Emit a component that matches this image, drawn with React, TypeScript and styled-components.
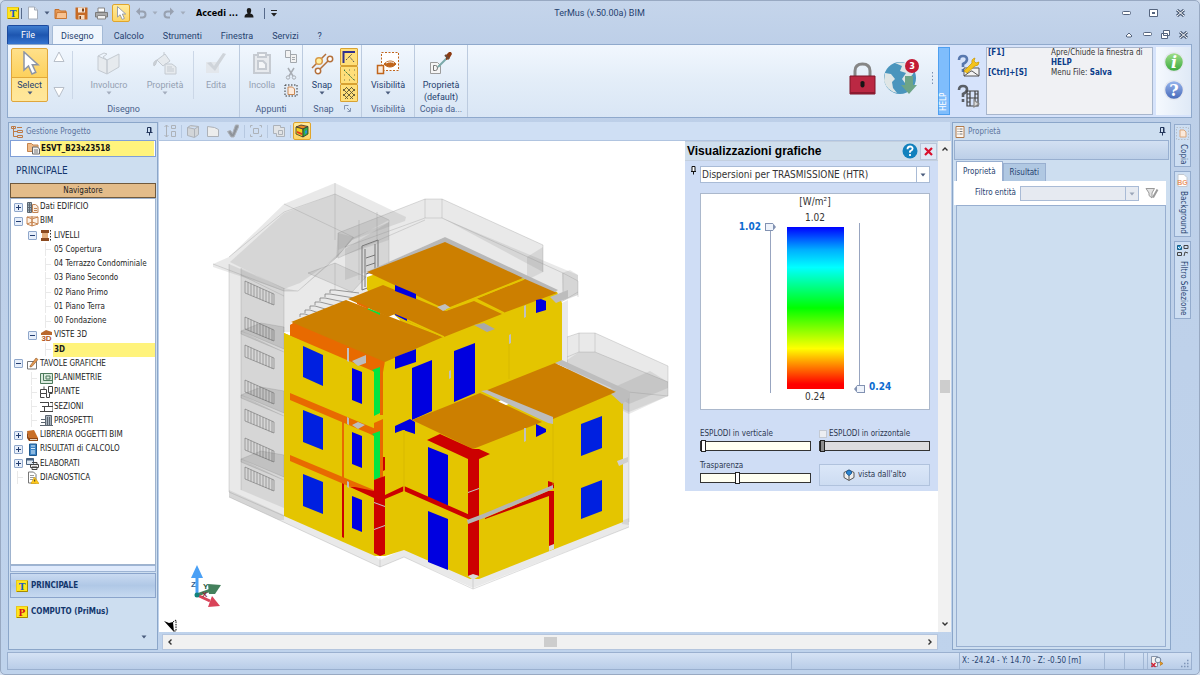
import React, { useState } from "react";
import styled, { createGlobalStyle, css } from "styled-components";

const tahoma = '"DejaVu Sans Condensed", "DejaVu Sans", sans-serif';
const segoe = 'Roboto, "Open Sans", sans-serif';
const ink = "#26426f";
const line = "#8ba6c9";

const Global = createGlobalStyle`
  *, *::before, *::after { box-sizing: border-box; }
  body { margin: 0; background: #d3dfef; font: 9px/12px ${segoe}; color: ${ink}; }
  button { font: inherit; color: inherit; padding: 0; border: 0; background: none; }
  select, input { font: inherit; color: inherit; margin: 0; }
  svg { display: block; flex: none; writing-mode: horizontal-tb; }
  ul { list-style: none; margin: 0; padding: 0; }
`;

/* ---------- window frame ---------- */

const Window = styled.div`
  min-height: 100vh;
  display: flex;
  flex-direction: column;
  padding: 0 7px 4px 6px;
  border: 1px solid #98a9c2;
  border-radius: 5px;
  background: linear-gradient(#c5d5eb, #bdcfe8 44px, #bfd3ec);
`;

const TitleBar = styled.header`
  height: 24px;
  display: grid;
  grid-template-columns: 1fr auto 1fr;
  align-items: center;
`;

const QuickBar = styled.div`
  display: flex;
  align-items: center;
  gap: 2px;
`;

const QuickButton = styled.button<{ $active?: boolean }>`
  width: 18px;
  height: 18px;
  display: grid;
  place-items: center;
  ${(p) =>
    p.$active &&
    css`
      border: 1px solid #e0a52c;
      border-radius: 2px;
      background: linear-gradient(#ffeb9c, #fdd566);
    `}
`;

const Divider = styled.i`
  width: 1px;
  height: 11px;
  background: #56698a;
`;

const Account = styled.button`
  display: flex;
  align-items: center;
  gap: 6px;
  margin: 0 8px;
  font: bold 9px/12px ${tahoma};
  color: #000;
`;

const QuickMenu = styled.button`
  width: 14px;
  height: 12px;
  display: grid;
  place-items: center;
`;

const Title = styled.h1`
  margin: 0;
  font: 9px/12px ${segoe};
`;

const WindowButtons = styled.div<{ $wide?: boolean }>`
  display: flex;
  justify-content: flex-end;
  align-items: center;
  gap: ${(p) => (p.$wide ? 15 : 6)}px;
  padding-right: ${(p) => (p.$wide ? 6 : 3)}px;
`;

const GlyphButton = styled.button`
  width: 12px;
  height: 12px;
  display: grid;
  place-items: center;
`;

/* ---------- ribbon ---------- */

const TabRow = styled.nav`
  height: 19px;
  display: flex;
  align-items: stretch;
`;

const FileTab = styled.button`
  width: 42px;
  margin-right: 3px;
  border: 1px solid #1c4a9e;
  border-bottom: 0;
  border-radius: 2px 2px 0 0;
  background: linear-gradient(#3f7ed0, #1d55b0 50%, #3474cf);
  color: #fff;
`;

const RibbonTab = styled.button<{ $active?: boolean }>`
  padding: 2px 8px 0;
  margin-right: 3px;
  border-radius: 2px 2px 0 0;
  ${(p) =>
    p.$active &&
    css`
      border: 1px solid #a4bad6;
      border-bottom: 0;
      background: #f0f6fd;
    `}
`;

const Spacer = styled.div`
  flex: 1;
`;

const Ribbon = styled.section`
  height: 74px;
  flex: none;
  display: flex;
  align-items: stretch;
  border: 1px solid #8fa9cc;
  background: linear-gradient(#f1f7fe, #e3edf8 50%, #d9e6f5);
`;

const Group = styled.div`
  display: flex;
  flex-direction: column;
  justify-content: space-between;
  padding: 3px 3px 2px;
  border-right: 1px solid #bccbdf;
`;

const GroupBody = styled.div`
  display: flex;
  align-items: flex-start;
  gap: 2px;
`;

const GroupLabel = styled.div`
  display: flex;
  justify-content: center;
  gap: 10px;
  color: #49618b;
`;

const BigButton = styled.button<{ $w: number; $active?: boolean }>`
  width: ${(p) => p.$w}px;
  height: 54px;
  display: flex;
  flex-direction: column;
  align-items: center;
  line-height: 12px;
  border: 1px solid transparent;
  svg:first-child { margin: 2px 0 4px; }
  ${(p) =>
    p.$active &&
    css`
      border-color: #dfa63c;
      border-radius: 2px;
      background: linear-gradient(#ffe08a, #fdd15c 28px, #e2a93a 28px, #e2a93a 29px, #ffe48e 29px, #ffe79b);
    `}
  &:disabled { color: #94a0b2; }
`;

const SmallColumn = styled.div`
  display: flex;
  flex-direction: column;
  gap: 4px;
  padding: 2px 1px 0;
`;

const ScrollPair = styled.div`
  height: 48px;
  margin-top: 2px;
  padding: 1px 3px 0;
  display: flex;
  flex-direction: column;
  justify-content: space-between;
`;

const ToggleStack = styled.div`
  display: flex;
  flex-direction: column;
`;

const Toggle = styled.button`
  width: 18px;
  height: 18px;
  display: grid;
  place-items: center;
  border: 1px solid #d8a233;
  border-radius: 1px;
  background: #ffdf7a;
`;

const GroupSplit = styled.i<{ $tight?: boolean }>`
  width: 1px;
  height: 48px;
  margin: ${(p) => (p.$tight ? "3px 0 0" : "3px 6px 0 2px")};
  background: #cbd7e7;
`;

const RibbonTools = styled.div`
  display: flex;
  align-items: center;
  gap: 7px;
  margin-right: 4px;
  padding-bottom: 6px;
`;

const Badged = styled.button`
  position: relative;
`;

const Badge = styled.span`
  position: absolute;
  top: -2px;
  right: -2px;
  width: 14px;
  height: 14px;
  border-radius: 7px;
  background: #c21a35;
  color: #fff;
  font: bold 9px/14px ${tahoma};
`;

const Help = styled.section`
  display: flex;
  padding: 2px 0;
  background: #d6e3fb;
`;

const HelpStrip = styled.button`
  width: 12px;
  border: 1px solid #4e9ff0;
  background: #7fbdfc;
  color: #fff;
  writing-mode: vertical-rl;
  rotate: 180deg;
  font: 8px/10px ${tahoma};
  text-align: left;
  padding-top: 3px;
`;

const HelpActions = styled.div`
  width: 36px;
  display: flex;
  flex-direction: column;
  align-items: center;
  justify-content: space-evenly;
`;

const HelpKeys = styled.dl`
  width: 167px;
  margin: 0;
  padding: 0 1px;
  display: grid;
  grid-template-columns: 63px 1fr;
  align-content: start;
  border: 1px solid #a8b6cc;
  background: #f0f1f4;
  font: 8px/10px ${tahoma};
  color: #333;
  dt, strong { font-weight: bold; color: #0a3c8a; }
  dd { margin: 0; }
`;

const Rounds = styled.div`
  width: 35px;
  display: flex;
  flex-direction: column;
  align-items: center;
  gap: 6px;
  padding-top: 4px;
  margin-left: 3px;
  background: linear-gradient(90deg, #f5f9fe, #dfe9f6);
`;

/* ---------- work area ---------- */

const Work = styled.main`
  flex: 1;
  display: flex;
  padding: 4px 0 2px 1px;
`;

const SidePanel = styled.aside`
  width: 150px;
  flex: none;
  display: flex;
  flex-direction: column;
  padding: 0 1px;
  border: 1px solid ${line};
  background: #cddef0;
`;

const PanelHeader = styled.h2`
  height: 17px;
  flex: none;
  display: flex;
  align-items: center;
  gap: 3px;
  margin: 0;
  padding: 0 3px 0 1px;
  font: 8px/12px ${tahoma};
  color: #5c749d;
  svg:last-child { margin-left: auto; }
`;

const ProjectBox = styled.div`
  height: 17px;
  flex: none;
  display: flex;
  align-items: center;
  padding: 0 1px 0 16px;
  gap: 0;
  border: 1px solid #7f9fd8;
  background: #fff;
`;

const ProjectName = styled.strong`
  flex: 1;
  padding-left: 1px;
  background: #fff37c;
  color: #111;
  font: bold 8px/15px ${tahoma};
`;

const SectionTitle = styled.h3`
  margin: 0;
  padding: 8px 6px 6px;
  font: 10px/12px ${tahoma};
  color: #12366c;
`;

const NavigatorBar = styled.button`
  height: 15px;
  flex: none;
  border: 1px solid #70593c;
  background: #e3bc8a;
  color: #222;
  font: 8px/12px ${tahoma};
`;

const TreeBox = styled.div`
  flex: 1;
  padding-top: 1px;
  border: 1px solid #9fb3ce;
  background: #fff;
`;

const Tree = styled.ul`
  height: 285px;
  display: grid;
  grid-auto-rows: 1fr;
  font: 8px/14px ${tahoma};
  color: #1c1c1c;
`;

const TreeRow = styled.li<{ $level: number; $selected?: boolean }>`
  display: flex;
  align-items: center;
  padding-left: ${(p) => p.$level * 14 + 1}px;
  white-space: nowrap;
  font-weight: ${(p) => (p.$selected ? "bold" : "normal")};
`;

const Slot = styled.span<{ $w: number; $dotted?: boolean }>`
  width: ${(p) => p.$w}px;
  height: 13px;
  display: grid;
  place-items: center;
  ${(p) =>
    p.$dotted &&
    css`
      background: linear-gradient(#e9e9e9, #e9e9e9) 5px 0 / 1px 100% no-repeat,
        linear-gradient(#e9e9e9, #e9e9e9) 5px 6px / 6px 1px no-repeat;
    `}
`;

const Expander = styled.button`
  width: 9px;
  height: 9px;
  display: grid;
  place-items: center;
  border: 1px solid #8fa7cb;
  border-radius: 1px;
  background: #e6eefa;
`;

const TreeLabel = styled.span<{ $selected?: boolean }>`
  flex: ${(p) => (p.$selected ? 1 : "none")};
  padding-left: 1px;
  background: ${(p) => (p.$selected ? "#fff37c" : "none")};
`;

const Grip = styled.i`
  height: 7px;
  flex: none;
  border: 1px solid #9db4d4;
  background: #dfeafc;
`;

const ModuleButton = styled.button<{ $active?: boolean }>`
  height: 25px;
  flex: none;
  display: flex;
  align-items: center;
  gap: 3px;
  margin-top: 1px;
  padding: 0 5px;
  border: 1px solid ${(p) => (p.$active ? "#8aa4cb" : "transparent")};
  background: ${(p) => (p.$active ? "linear-gradient(#c9daf1, #b0c8e6 50%, #c6d9f0)" : "none")};
  font: bold 8px/12px ${tahoma};
  color: #12366c;
`;

const PanelFoot = styled.div`
  height: 25px;
  display: flex;
  justify-content: flex-end;
  align-items: center;
  padding-right: 9px;
`;

const Center = styled.section`
  flex: 1;
  min-width: 0;
  display: flex;
  flex-direction: column;
  margin-left: 1px;
`;

const ViewToolbar = styled.div`
  height: 19px;
  flex: none;
  display: flex;
  align-items: center;
  gap: 2px;
  padding-left: 2px;
  background: #cfdff4;
  border-bottom: 1px solid #b0c4e0;
`;

const ToolSplit = styled.i`
  width: 1px;
  height: 13px;
  background: #b6c8e0;
`;

const Stage = styled.div`
  flex: 1;
  display: grid;
  grid-template-columns: 1fr 13px;
`;

const Viewport = styled.div`
  display: flex;
  justify-content: space-between;
  align-items: flex-start;
  padding-left: 3px;
  background: #fff;
`;

const ScrollBar = styled.div<{ $horizontal?: boolean }>`
  display: flex;
  flex-direction: ${(p) => (p.$horizontal ? "row" : "column")};
  justify-content: space-between;
  align-items: center;
  background: #f1f1f1;
  padding: ${(p) => (p.$horizontal ? "0 3px" : "4px 0")};
  margin: ${(p) => (p.$horizontal ? "2px 0 0 3px" : "0")};
  border: ${(p) => (p.$horizontal ? "1px solid #b4c5de" : "0")};
  height: ${(p) => (p.$horizontal ? "16px" : "auto")};
`;

const Thumb = styled.i<{ $horizontal?: boolean }>`
  width: ${(p) => (p.$horizontal ? 13 : 10)}px;
  height: ${(p) => (p.$horizontal ? 10 : 13)}px;
  background: #cdcdcd;
`;

/* ---------- thermal palette ---------- */

const Palette = styled.section`
  width: 253px;
  flex: none;
  background: #cfddf5;
`;

const PaletteHead = styled.h2`
  height: 20px;
  display: flex;
  align-items: center;
  gap: 2px;
  margin: 0 0 5px;
  padding: 0 1px 0 2px;
  border: 1px solid #c3cfdf;
  border-width: 1px 0;
  background: #cfdeec;
  font: bold 12px/18px "Liberation Sans", sans-serif;
  color: #000;
  button:first-of-type { margin-left: auto; }
`;

const CloseButton = styled.button`
  width: 17px;
  height: 17px;
  display: grid;
  place-items: center;
  border: 1px solid #b9c6da;
  background: #dfe9f6;
`;

const PaletteRow = styled.div`
  display: flex;
  gap: 4px;
  padding: 0 8px 0 6px;
`;

const Combo = styled.div<{ $muted?: boolean }>`
  flex: 1;
  height: ${(p) => (p.$muted ? 15 : 17)}px;
  position: relative;
  display: flex;
  border: 1px solid #a9bbd6;
  background: ${(p) => (p.$muted ? "#e6eaf1" : "#fff")};
  svg { position: absolute; right: 3px; top: ${(p) => (p.$muted ? 5 : 6)}px; pointer-events: none; }
  &::after {
    content: "";
    position: absolute;
    inset: 0 12px 0 auto;
    border-left: 1px solid #a9bbd6;
  }
`;

const ComboSelect = styled.select`
  appearance: none;
  flex: 1;
  min-width: 0;
  height: 100%;
  padding: 0 14px 0 1px;
  border: 0;
  background: none;
  color: #333;
  font: 10px/15px ${tahoma};
`;

const Legend = styled.div`
  display: grid;
  grid-template-columns: 64px 22px 57px 21px 1fr;
  grid-template-rows: 16px 17px 162px 16px;
  margin: 10px 8px 0 15px;
  padding-bottom: 4px;
  border: 1px solid #abb8cc;
  background: #fff;
  font: 10px/16px ${tahoma};
  color: #333;
  text-align: center;
`;

const LegendText = styled.span<{ $row: number }>`
  grid-area: ${(p) => p.$row} / 1 / auto / -1;
`;

const Ramp = styled.div`
  grid-area: 3 / 3;
  background: linear-gradient(#00f, #00aeff 14%, #0ff 25%, #0f0 50%, #ff0 75%, #f00 97%);
`;

const Limit = styled.output<{ $low?: boolean }>`
  grid-area: 3 / ${(p) => (p.$low ? 5 : 1)};
  align-self: ${(p) => (p.$low ? "end" : "start")};
  text-align: ${(p) => (p.$low ? "left" : "right")};
  padding: 0 4px;
  margin: ${(p) => (p.$low ? "0 0 -6px" : "-8px 0 0")};
  font: bold 10px/16px ${tahoma};
  color: #0e6bd0;
`;

const RampSlider = styled.input<{ $low?: boolean }>`
  grid-area: 3 / ${(p) => (p.$low ? 4 : 2)};
  justify-self: ${(p) => (p.$low ? "end" : "start")};
  appearance: none;
  writing-mode: vertical-lr;
  direction: rtl;
  width: 11px;
  height: 170px;
  margin-top: -4px;
  background: linear-gradient(#98a5c0, #98a5c0) 5px 0 / 1px 100% no-repeat;
  &::-webkit-slider-thumb {
    appearance: none;
    width: 11px;
    height: 8px;
    background: linear-gradient(#eef3fb, #eef3fb) ${(p) => (p.$low ? "3px" : "1px")} 1px / 7px 6px no-repeat, #8292b2;
    clip-path: ${(p) =>
      p.$low
        ? "polygon(0 50%, 30% 0, 100% 0, 100% 100%, 30% 100%)"
        : "polygon(0 0, 70% 0, 100% 50%, 70% 100%, 0 100%)"};
  }
`;

const ExplodeGrid = styled.div`
  display: grid;
  grid-template-columns: 1fr 1fr;
  column-gap: 8px;
  margin: 17px 8px 0 15px;
  font: 8px/14px ${tahoma};
  color: #2c3850;
`;

const Field = styled.div`
  display: flex;
  flex-direction: column;
  padding-bottom: 8px;
`;

const FieldLabel = styled.label`
  height: 14px;
  display: flex;
  align-items: center;
  gap: 2px;
`;

const TickBox = styled.input`
  appearance: none;
  width: 8px;
  height: 8px;
  border: 1px solid #c4cad4;
  background: #eceef2;
`;

const BarSlider = styled.input`
  appearance: none;
  width: 100%;
  height: 10px;
  border: 1px solid #333;
  background: #fffff2;
  &:disabled { background: #dcdcde; }
  &::-webkit-slider-thumb {
    appearance: none;
    width: 5px;
    height: 12px;
    border: 1px solid #222;
    background: #fff;
  }
  &:disabled::-webkit-slider-thumb { background: #8d8d8d; }
`;

const TopViewButton = styled.button`
  height: 22px;
  display: flex;
  align-items: center;
  justify-content: center;
  gap: 3px;
  margin-top: 5px;
  border: 1px solid #b0c2dd;
  background: linear-gradient(#dbe7f8, #cddcf2);
`;

/* ---------- properties ---------- */

const PropertyPanel = styled.aside`
  width: 219px;
  flex: none;
  display: flex;
  flex-direction: column;
  padding: 0 1px 2px;
  margin: 0 3px 0 2px;
  border: 1px solid ${line};
  background: #cddef0;
`;

const PropertyBand = styled.i`
  height: 20px;
  flex: none;
  border: 1px solid #98afd0;
  background: linear-gradient(#d3e0f2, #bccfe8);
`;

const PropertyTabs = styled.div`
  display: flex;
  align-items: flex-end;
  height: 21px;
  padding-left: 2px;
`;

const PropertyTab = styled.button<{ $active?: boolean }>`
  height: ${(p) => (p.$active ? 20 : 18)}px;
  padding: 0 6px;
  border: 1px solid #98afd0;
  border-bottom: 0;
  background: ${(p) => (p.$active ? "#fff" : "#b0c8e2")};
  font: 8px/16px ${tahoma};
`;

const FilterRow = styled.div`
  height: 24px;
  display: flex;
  align-items: center;
  gap: 4px;
  padding: 0 7px 0 21px;
  margin-right: 3px;
  background: #fff;
  font: 8px/12px ${tahoma};
  svg:last-child { margin-left: 2px; }
`;

const PropertyBody = styled.div`
  flex: 1;
  margin: 0 3px 0 2px;
  border: 1px solid #98afd0;
`;

const SideTabs = styled.div`
  width: 18px;
  flex: none;
  display: flex;
  flex-direction: column;
  gap: 4px;
  padding: 2px 1px 0 0;
`;

const SideTab = styled.button`
  writing-mode: vertical-rl;
  display: flex;
  align-items: center;
  gap: 4px;
  padding: 2px 1px 2px;
  border: 1px solid #93abcd;
  background: #cddef2;
  font: 8px/14px ${tahoma};
`;

/* ---------- status bar ---------- */

const StatusBar = styled.footer`
  height: 18px;
  flex: none;
  display: flex;
  align-items: stretch;
  justify-content: flex-end;
  border: 1px solid #9ab0cf;
  background: linear-gradient(#d5e2f4, #b9cde8);
  font: 8px/16px ${tahoma};
`;

const StatusCell = styled.span<{ $w: number }>`
  width: ${(p) => p.$w}px;
  display: flex;
  align-items: center;
  padding-left: 2px;
  border-left: 1px solid #a2b7d4;
`;

/* ---------- small drawings ---------- */

const Caret = ({ c = "#4a5c7d" }: { c?: string }) => (
  <svg width="6" height="4" viewBox="0 0 6 4"><path d="M0.5 0.5h5L3 3.5z" fill={c} /></svg>
);

const Pin = () => (
  <svg width="7" height="9" viewBox="0 0 7 9" fill="none" stroke="#22355a">
    <path d="M1.500 .5h3.500v5h-3.500zM4.500 .5v5M.5 5.500h6M3.500 5.500v3" />
  </svg>
);

const Chevron = ({ d }: { d: string }) => (
  <svg width="8" height="8" viewBox="0 0 8 8" fill="none" stroke="#333" strokeWidth="1.4"><path d={d} /></svg>
);

const AppLogo = ({ letter, c }: { letter: string; c: string }) => (
  <svg width="12" height="12" viewBox="0 0 12 12">
    <rect x=".5" y=".5" width="11" height="11" fill="#ffe51e" stroke="#e8c81a" />
    <path d="M11.500 1v10.500H1" stroke="#a58a00" fill="none" />
    <text x="6" y="9.500" textAnchor="middle" fontFamily="DejaVu Serif" fontWeight="bold" fontSize="9" fill={c}>{letter}</text>
  </svg>
);

const Cursor = ({ size }: { size: number }) => (
  <svg width={size} height={size} viewBox="0 0 24 24">
    <path d="M6 1v18l4.500-4 3.500 8 3.800-1.700-3.500-7.600H20z" fill="#fff" stroke="#8d95a6" strokeWidth="1.500" />
  </svg>
);

const NewDoc = () => (
  <svg width="12" height="14" viewBox="0 0 12 14"><path d="M1.500 1h6l3 3v9h-9z" fill="#fff" stroke="#a5adba" /><path d="M7.500 1v3h3" fill="#dfe4ea" stroke="#a5adba" /></svg>
);
const Folder = () => (
  <svg width="14" height="13" viewBox="0 0 14 13"><path d="M1 11.500v-9h4l1.500 1.500H12v7.500z" fill="#e69a56" stroke="#c56f2a" /><path d="M3 5.500h9.500v6H2z" fill="#f7c292" stroke="#c56f2a" strokeWidth=".8" /></svg>
);
const Save = () => (
  <svg width="13" height="13" viewBox="0 0 13 13"><path d="M.5.500h12v12h-11l-1-1z" fill="#c66a25" /><path d="M3 .5h7v5H3z" fill="#f5e4d4" /><path d="M3.500 8h6v4.500h-6z" fill="#f6d9bd" /><path d="M7 1.500h2v3H7zM4.500 9h1.500v3H4.500z" fill="#7c4016" /></svg>
);
const Printer = () => (
  <svg width="13" height="13" viewBox="0 0 13 13"><path d="M3 1h6.500v4H3z" fill="#fff" stroke="#888" /><path d="M.5 5.500h12v4.500H.5z" fill="#a8a8a8" stroke="#7a7a7a" /><path d="M2.500 8.500h8v3.500h-8z" fill="#f0f0f0" stroke="#888" /></svg>
);
const Turn = ({ flip }: { flip?: boolean }) => (
  <svg width="12" height="12" viewBox="0 0 12 12" fill="none" stroke="#98a1b0" strokeWidth="2">
    <g transform={flip ? "matrix(-1 0 0 1 12 0)" : undefined}><path d="M3 4.500h4.500a3 3 0 0 1 0 6H5" /><path d="M5 .5L1 4.500l4 4z" fill="#98a1b0" stroke="none" /></g>
  </svg>
);
const Person = () => (
  <svg width="10" height="10" viewBox="0 0 10 10" fill="#1c1c1c"><path d="M5 0a2.200 2.200 0 0 1 2.200 2.400C7.200 4 6.500 5 6.300 5.400 8.500 6 9.500 6.500 9.500 9.500H.5C.5 6.500 1.500 6 3.700 5.400 3.500 5 2.800 4 2.800 2.400A2.200 2.200 0 0 1 5 0z" /></svg>
);
const CubeGhost = () => (
  <svg width="26" height="24" viewBox="0 0 26 24" fill="#e6eaee" stroke="#c4cad1"><path d="M2 5l9 4v14l-9-4zM11 9l12-6v13l-12 7z" /><path d="M2 5l6-3 3 1-4 3 4 3" fill="none" /></svg>
);
const PaintGhost = () => (
  <svg width="26" height="24" viewBox="0 0 26 24" fill="#e6eaee" stroke="#c4cad1"><path d="M5 9l8-6 5 7-7 5zM12 4V1" /><path d="M5 9c-3 1-4 3-3 6 2-1 2-3 3-6z" fill="#cdd2d8" /><path d="M13 13h7l4 3v7H13z" /><path d="M15 16h5M15 18h7M15 20h7" /></svg>
);
const EditGhost = () => (
  <svg width="24" height="24" viewBox="0 0 24 24" fill="#cfd4da"><path d="M2 11h13v11H2z" fill="#e3e7ec" /><path d="M3 12l4-1 3 4L19 2l3 1L11 20z" /></svg>
);
const ClipGhost = () => (
  <svg width="20" height="24" viewBox="0 0 20 24" fill="none" stroke="#c6cbd2" strokeWidth="2"><path d="M2 4h16v18H2z" fill="#e7eaee" /><path d="M6 2h8v4H6zM6 10h5l3 3v5H6z" fill="#f4f6f8" /></svg>
);
const SnapIcon = () => (
  <svg width="24" height="24" viewBox="0 0 24 24" fill="none" stroke="#b4703b" strokeWidth="1.500"><path d="M2 17L16 3M8 20L20 8" /><circle cx="9" cy="10" r="3.300" fill="#fff0a0" stroke="#d99b4a" /><circle cx="20" cy="8" r="2.700" fill="#fff" /><circle cx="8" cy="20" r="2.700" fill="#fff" /></svg>
);
const EyeIcon = () => (
  <svg width="24" height="24" viewBox="0 0 24 24" fill="none" stroke="#c0651c"><path d="M5.500 1.500h17v18h-17z" fill="#fff" strokeDasharray="2 1.500" /><path d="M1.500 14.500h6v8h-6z" fill="#f8ece0" strokeWidth="1.500" /><path d="M8 13c4-4 9-4 12 0-3 4-9 4-12 0z" fill="#c0651c" /><path d="M10 12c3-1.500 6-1.500 8 0" stroke="#fff" /></svg>
);
const PipetteIcon = () => (
  <svg width="24" height="24" viewBox="0 0 24 24"><path d="M1.500 11.500h7l3 3v8h-10z" fill="#f5f5f5" stroke="#9c9c9c" /><path d="M4.500 14.500h2q2 0 2 2.500t-2 2.500h-2z" fill="none" stroke="#777" /><path d="M9 16L18 7" stroke="#7aa9a9" strokeWidth="2" /><path d="M17 4l3-3h2l1 2-3 5-3 1z" fill="#8c3b12" /><path d="M16 4l4 4" stroke="#6b4a38" strokeWidth="2" /></svg>
);
const CopyIcon = () => (
  <svg width="14" height="13" viewBox="0 0 14 13" fill="#f2f2f2" stroke="#a3a8ae"><path d="M1.500.500h5v7h-5zM6.500 4.500h6v8h-6z" /><path d="M8 7.500h3M8 9.500h3" /></svg>
);
const CutIcon = () => (
  <svg width="14" height="13" viewBox="0 0 14 13" fill="none" stroke="#a8adb4"><path d="M4 1l5 8M10 1L5 9" strokeWidth="1.500" /><circle cx="4" cy="10.500" r="1.700" /><circle cx="10" cy="10.500" r="1.700" /></svg>
);
const PasteArea = () => (
  <svg width="14" height="13" viewBox="0 0 14 13" fill="none"><path d="M1 1h12v11H1z" stroke="#333" strokeDasharray="1.500 1.500" /><path d="M4 3h4.500L10.500 5v5.500H4z" fill="#fdebdc" stroke="#c98956" /></svg>
);
const Angle = () => (
  <svg width="14" height="14" viewBox="0 0 14 14"><path d="M1.500 13V2H13" fill="none" stroke="#30308e" strokeWidth="2" /><path d="M4 10l6-6M7 6l5 6" stroke="#555" strokeDasharray="2 1" /></svg>
);
const DotLine = () => (
  <svg width="14" height="14" viewBox="0 0 14 14"><path d="M2 2h11M2 7h11M2 12h11" stroke="#77724c" strokeDasharray="1 4" /><path d="M2 2l10 10" stroke="#3c7c40" strokeDasharray="2 1" /></svg>
);
const Mesh = () => (
  <svg width="14" height="14" viewBox="0 0 14 14" stroke="#5c5636" strokeWidth=".9" fill="none"><path d="M1 3l10 10M1 8l5 5M4 1l9 9M9 1l4 4M13 3L3 13M13 8l-5 5M10 1L1 10M5 1L1 5" /></svg>
);
const Padlock = () => (
  <svg width="27" height="33" viewBox="0 0 27 33"><path d="M6 15V9q0-7 7.500-7T21 9v6" fill="none" stroke="#868686" strokeWidth="3" /><path d="M1 14h25v18H1z" fill="#bb2843" stroke="#7c1428" /><path d="M11.500 20q2-2 4 0v4q-2 3-4 0z" fill="#151515" /><path d="M1 30h25v2H1z" fill="#8d1a30" /></svg>
);
const Globe = () => (
  <svg width="34" height="34" viewBox="0 0 34 34"><circle cx="17" cy="17" r="16" fill="#4a95bd" /><path d="M2 12l6 1 4 5-3 3 1 6 4 5Q4 30 1 20zM12 2l7 3-2 5 6 2-4 6 3 4 8-9 2-6Q24 0 12 2z" fill="#dfe6e6" /><path d="M22 15h8v9h4l-8 9-8-9h4z" fill="#6da487" /></svg>
);
const AskIcon = ({ film }: { film?: boolean }) => (
  <svg width="24" height="24" viewBox="0 0 24 24" fill="none">
    <path d="M3 6q0-4 4-4t4 3.500q0 2.500-4 4.500v3M7 15v3" stroke={film ? "#5a5f66" : "#5878ae"} strokeWidth="2.600" />
    {film ? (
      <g stroke="#404040" strokeWidth="1.200"><path d="M11 7h11v15H11zM14 7v15M19 7v15M11 14h11M11 10h3M11 18h3M19 10h3" /><path d="M18 16l5 4-5 3z" fill="#ddd" stroke="#888" /></g>
    ) : (
      <g><path d="M8 14h15v8H8z" fill="#f2f2f2" stroke="#555" /><path d="M8 22l7-5h1l7 5" stroke="#555" /><path d="M8 17L16 9q-1-4 3-5l-1 3 2 2 3-1q0 4-4 4L11 19z" fill="#f4c31c" stroke="#c59600" strokeWidth=".7" /></g>
    )}
  </svg>
);
const Ball = ({ sign, a, b }: { sign: string; a: string; b: string }) => (
  <svg width="22" height="22" viewBox="0 0 22 22">
    <defs><linearGradient id={"ball" + a.slice(1)} x1="0" y1="0" x2="0" y2="1"><stop stopColor={a} /><stop offset="1" stopColor={b} /></linearGradient></defs>
    <circle cx="11" cy="11" r="9.500" fill={`url(#ball${a.slice(1)})`} stroke="#e4e8f0" strokeWidth="1.500" />
    <text x="11" y="17" textAnchor="middle" fontFamily="DejaVu Serif" fontStyle={sign === "i" ? "italic" : "normal"} fontWeight="bold" fontSize="16" fill="#fff">{sign}</text>
  </svg>
);
const ListIcon = () => (
  <svg width="12" height="12" viewBox="0 0 12 12" fill="none" stroke="#bd7a45"><path d="M2.500 1v9.500H6M2.500 5.500H6" /><path d="M.5.500h4v2h-4zM6.500 4.500h5v2h-5zM6.500 9.500h5v2h-5zM6 1.500h5" /></svg>
);

type Name =
  | "building" | "cube" | "levels" | "three" | "pencil" | "plan" | "floor" | "section" | "front"
  | "books" | "results" | "print" | "warn" | "project";

const drawings: Record<Name, React.ReactNode> = {
  building: <g fill="none" stroke="#5d6670"><path d="M1.500 1.500h4v10h-4z" fill="#a3b8c2" /><path d="M1.500 4h4M1.500 6.500h4M1.500 9h4M3.500 1.500v10" /><path d="M6.500 3.500h3l2.500 2v6H6.500z" fill="#fbeee2" stroke="#c08454" /><path d="M8 7.500h3M8 9.500h3" stroke="#c08454" /></g>,
  cube: <g fill="#fdf3e8" stroke="#c27c44" strokeWidth=".9"><path d="M1 2l5 2v7l-5-2zM6 4l6-2v7l-6 2zM1 2h4l7 0M1 9l5-2 6 2M6 4V1" /></g>,
  levels: <g><path d="M1 1h8v3H1zM1 9h8v3H1z" fill="#8b4a1f" /><path d="M2 4h6v5H2z" fill="#e5b07e" /><path d="M10.500 1v11" stroke="#333" strokeDasharray="1.500 1.500" /></g>,
  three: <g><path d="M1 4l5-3 6 2v3H1z" fill="#b9682d" /><text x="6.500" y="12" textAnchor="middle" fontSize="8" fontWeight="bold" fontFamily="Liberation Sans" fill="#b3571a">3D</text></g>,
  pencil: <g><path d="M1.500 4.500h9v7.500h-9z" fill="#fff" stroke="#777" /><path d="M4 9l6-8 2 1.500L6 9.500 4 10z" fill="#e39a52" stroke="#8b5221" strokeWidth=".6" /></g>,
  plan: <g fill="none" stroke="#4e7b5d"><path d="M.5 1.500h12v10H.5z" fill="#dcebdf" /><path d="M3.500 1.500v7h9M6 4h4v3H6z" /></g>,
  floor: <g fill="none" stroke="#444"><path d="M.5 3.500h6v4h-6zM8.500.500h4v6h-4zM.5 7.500v4h4M6.500 7.500v4h3v-4h3M4 .5v3" /></g>,
  section: <g fill="none" stroke="#444"><path d="M0 2.500h8M2 6.500h11M0 11.500h13M8.500 2v4M4.500 6.500v5M10 2.500h3v9" /></g>,
  front: <g><path d="M5.500 1.500h6v10h-6z" fill="#a9b3bd" stroke="#5b6570" /><path d="M1 5.500h4M1 8.500h4M0 11.500h13M7.500 3v8M9.500 3v8" stroke="#5b6570" /></g>,
  books: <g><path d="M1 2l7-1 4 8H3z" fill="#c96f27" /><path d="M1 2v7l2 3h9V9H3z" fill="#8d4513" /><path d="M4 10.500h7" stroke="#ecd3bb" /></g>,
  results: <g><path d="M3.500 1h7v11.500h-7z" fill="#3f85c6" stroke="#1d588f" /><path d="M5 3h4M5 5.500h4M5 8h4M5 10h4" stroke="#d8ecfb" /></g>,
  print: <g><path d="M.5 1.500h7v6h-7z" fill="#dde8f3" stroke="#47617f" /><path d="M.5 2.500h7" stroke="#47617f" strokeWidth="2" /><path d="M4.500 7.500h8v3h-8zM6 5.500h5v2M6 10h5v2.500H6z" fill="#eee" stroke="#444" /></g>,
  warn: <g><path d="M2.500 1h5l2.500 2.500V12h-7.500z" fill="#fff" stroke="#777" /><path d="M4 4.500h4M4 6.500h4M4 8.500h3" stroke="#999" /><path d="M8.500 6L13 12.500H5z" fill="#ffc91a" stroke="#d19a00" strokeWidth=".6" /><path d="M8.700 8.500v2" stroke="#333" /></g>,
  project: <g><path d="M.5 9.500v-8h4L6 3h5v6.500z" fill="#f0bb88" stroke="#c4834c" /><path d="M5.500 5h5l2 2v5h-7z" fill="#f1f1f1" stroke="#666" /><path d="M7 8h4M7 10h4" stroke="#777" /></g>,
};

const Mini = ({ name }: { name: Name }) => (
  <svg width="13" height="13" viewBox="0 0 13 13">{drawings[name]}</svg>
);

const GhostTool = ({ d, fill = "#d2d5d8" }: { d: string; fill?: string }) => (
  <svg width="14" height="14" viewBox="0 0 14 14"><path d={d} fill={fill} stroke="#adb2b9" /></svg>
);

const HeatCube = () => (
  <svg width="14" height="14" viewBox="0 0 14 14" stroke="#333" strokeWidth=".8">
    <path d="M1 3l5-2 7 1.500-5 2.500z" fill="#e98a22" /><path d="M1 3l7 2v8l-7-3z" fill="#f3d21b" /><path d="M8 5l5-2.500V10l-5 3z" fill="#2fae48" /><path d="M2 7l5 2v2L2 9z" fill="#e23b22" stroke="none" /><path d="M10 7l2-1v3l-2 1z" fill="#2b8fd6" stroke="none" />
  </svg>
);

/* ---------- building model ---------- */

// Transparent volumes: tower, roof, terraces, foundation slab.
const ghosts = [
  "229,264 284,288 284,520 279,520 229,497",
  "241,268 284,288 284,508 241,490",
  "213,264 229,257 284,204 335,183 406,217 405,221 352,240 336,258 298,291 284,291 213,267",
  "230,262 284,213 335,194 389,220 352,240 336,258 300,283 284,289",
  "284,288 298,291 340,252 389,222 389,262 367,272 367,292 291,322 291,332 284,332",
  "338,233 354,237 389,222 389,240 336,258",
  "338,233 425,199 442,199 543,245 543,272 442,218 425,218 345,247 338,250",
  "345,247 425,218 442,218 578,275 578,295 561,302 445,237 367,272 345,280",
  "527,257 543,247 543,272 527,280",
  "562,273 570,270 578,275 578,295 563,300",
  "567,337 579,333 595,333 668,366 668,396 629,414 567,382",
  "567,360 579,352 595,352 668,382 668,396 629,412 567,382",
  "608,390 650,371 668,382 668,388 629,404",
  "229,490 284,515 374,555 380,560 404,549 470,578 629,518 629,527 473,588 404,557 380,567 279,520 229,497",
  "616,392 629,392 629,525 622,524",
  "562,303 568,300 568,366 562,362",
  "308,273 335,263 366,277 352,292",
];

const ghostLines = [
  "229,264 229,492 284,516", "241,268 241,490", "335,183 335,240", "284,204 353,237 345,247",
  "213,264 284,291 298,291 336,258 354,237", "229,257 284,212 335,194 389,220 389,262",
  "338,233 425,199 442,199 543,245 543,272", "345,247 425,218 442,218 563,273 563,300", "425,199 425,218", "442,199 442,218",
  "338,233 338,258 425,220", "359,220 359,280", "377,212 377,240", "308,273 335,263 366,277 352,292 308,273",
  "335,263 335,290", "567,337 579,333 595,333 668,366 668,396", "567,357 579,352 595,352 668,382", "579,333 579,352", "595,333 595,352",
  "629,393 629,522", "608,390 668,396", "563,273 578,281 578,297", "284,288 284,332", "561,302 578,292",
  "229,497 279,520 380,567 404,557 473,589 629,527", "473,579 473,589", "380,558 380,567", "241,275 284,296",
];

// Coloured surfaces, painted back to front.
const solids: [string, string][] = [
  ["#e4c500", "284,333 375,372 375,556 284,516"],
  ["#e4c500", "367,277 445,250 557,292 562,303 562,361 470,420 470,579 404,550 385,556 375,556 375,372 385,361 400,320 367,290"],
  ["#b8b8b8", "366,272 445,237 558,290 552,294 445,243 370,274"],
  ["#cc7f00", "445,242 523,278 445,309 367,272"],
  ["#cc7f00", "525,279 557,293 503,313 476,299"],
  ["#cc7f00", "383,285 446,311 474,301 502,314 444,337 407,321 395,314 388,317 348,299"],
  ["#e86a00", "290,325 296,321 385,361 382,378 290,336"],
  ["#e4c500", "284,333 375,372 375,390 284,350"],
  ["#cc7f00", "346,300 443,337 385,362 291,322"],
  ["#c2c2c2", "347,348 349,348 349,362 347,361"],
  ["#bdbdbd", "352,361 366,355 366,363 358,366"],
  ["#e86a00", "366,361 383,361 383,415 380,415 380,367 366,367"],
  ["#0020e0", "303,346 323,355 323,386 303,377"],
  ["#0020e0", "303,410 323,418 323,450 303,442"],
  ["#0020e0", "303,474 323,482 323,514 303,506"],
  ["#0000e0", "352,368 362,372 362,404 352,400"],
  ["#e86a00", "290,393 383,432 383,441 370,434 290,400"],
  ["#e86a00", "374,423 383,419 383,480 374,480"],
  ["#e86a00", "290,455 374,490 374,497 290,461"],
  ["#cc0000", "355,487 374,491 374,498 350,487"],
  ["#e86a00", "342,421 344,422 344,482 342,481"],
  ["#cc0000", "342,483 344,484 344,538 342,537"],
  ["#bcbcbc", "347,417 349,418 349,425 347,424"],
  ["#bcbcbc", "352,425 358,422 365,425 358,429"],
  ["#bcbcbc", "347,481 349,482 349,488 347,487"],
  ["#0000e0", "352,432 362,436 362,468 352,464"],
  ["#0000e0", "352,496 362,500 362,532 352,528"],
  ["#00e541", "372,370 380,367 380,413 374,416 374,372"],
  ["#00e541", "372,434 380,431 380,477 374,480 374,436"],
  ["#cc0000", "374,480 385,476 385,554 380,556 374,553"],
  ["#cc0000", "383,457 385,457 385,470 383,471"],
  ["#c5c5c5", "374,502 385,506 385,507 374,503"],
  ["#c5c5c5", "374,529 385,525 385,526 374,530"],
  ["#0000e0", "395,285 416,294 416,299 395,291"],
  ["#0000e0", "395,314 407,319 407,321 395,315"],
  ["#00e541", "367,308 380,313 380,315 367,309"],
  ["#e86a00", "357,302 368,307 368,309 357,304"],
  ["#0000e0", "395,357 416,349 416,362 395,369"],
  ["#0000e0", "412,368 432,360 432,411 412,420"],
  ["#0000e0", "454,351 475,343 475,393 454,402"],
  ["#0000e0", "536,300 541,299 546,301 546,310 536,313"],
  ["#c0c0c0", "437,307 445,304 451,308 443,311"],
  ["#a9a9a9", "474,325 484,323 495,329 487,332"],
  ["#c0c0c0", "509,335 511,334 511,343 509,344"],
  ["#c0c0c0", "524,306 526,305 526,317 524,318"],
  ["#c0c0c0", "449,371 451,370 451,378 449,379"],
  ["#bdbdbd", "550,297 568,290 568,298 556,303"],
  ["#e4c500", "470,420 555,385 617,392 623,402 623,522 479,579 470,579"],
  ["#cc7f00", "555,363 616,392 553,419 485,391"],
  ["#bdbdbd", "481,391 487,390 553,417 553,424 548,423"],
  ["#bdbdbd", "555,363 562,360 629,391 629,398 622,404 611,394 618,391"],
  ["#0000e0", "395,426 410,419 415,422 415,434 403,430 395,433"],
  ["#cc7f00", "480,393 542,422 473,449 412,420"],
  ["#cc0000", "427,440 440,434 473,449 479,449 490,454 479,459 479,576 474,575 468,576 468,459"],
  ["#0000e0", "428,447 448,455 448,506 428,498"],
  ["#cc0000", "385,495 404,486 470,515 470,520 404,491 385,499"],
  ["#0000e0", "428,511 448,519 448,570 428,562"],
  ["#0000e0", "536,424 546,429 546,432 536,437"],
  ["#c0c0c0", "524,428 526,428 526,441 524,442"],
  ["#cc0000", "485,518 548,491 554,491 554,546 549,548 549,496 485,519"],
  ["#cc0000", "548,481 554,483 554,488 548,490"],
  ["#b5b5b5", "467,520 483,514 553,485 553,489 484,518 468,524"],
  ["#c5c5c5", "468,492 479,488 479,489 468,493"],
  ["#d9d9d9", "549,546 554,544 554,549 549,551"],
  ["#d9d9d9", "468,576 473,574 479,576 473,580"],
  ["#d0d0d0", "617,461 628,457 628,462 619,466"],
  ["#0020e0", "581,424 602,416 602,448 581,456"],
  ["#0020e0", "581,488 602,480 602,511 581,519"],
];

const balconies = [331, 395, 459];
const railings = [281, 317, 345, 380, 409, 438, 467];
const steps = [0, 1, 2, 3, 4, 5, 6];

const Building = () => (
  <svg width="523" height="491" viewBox="162 141 523 491" role="img" aria-label="Modello 3D dell'edificio">
    {ghosts.map((g) => <polygon key={g} points={g} fill="#787878" fillOpacity=".16" />)}
    {ghostLines.map((g) => <polyline key={g} points={g} fill="none" stroke="#8a8a8a" strokeOpacity=".4" strokeWidth=".7" />)}
    {balconies.map((y) => (
      <path key={y} d={`M241 ${y}l20 -8 23 4v22zM241 ${y}v3l43 18`} fill="#6e6e6e" fillOpacity=".2" stroke="#777" strokeOpacity=".35" strokeWidth=".6" />
    ))}
    {railings.map((y) => (
      <g key={y} fill="none" stroke="#555" strokeOpacity=".5" strokeWidth=".9">
        <path d={`M245 ${y}l29 13v11l-29 -12z`} />
        {[3, 6, 9, 12, 15, 18, 21, 24, 27].map((x) => <path key={x} d={`M${245 + x} ${y + x * 0.45}v11.500`} />)}
      </g>
    ))}
    <path d="M362 246l16 -6v44l-16 6zM365 249v38M375 244v40M366 258l9 -3M366 266l9 -3M366 274l9 -3" fill="none" stroke="#777" />
    {steps.map((s) => (
      <path key={s} d={`M${300 + s * 5} ${317 - s * 4}v-3h5l24 ${9 - s}`} fill="none" stroke="#808080" strokeWidth=".8" />
    ))}
    {solids.map(([c, p]) => <polygon key={c + p} points={p} fill={c} />)}
    <path d="M476 299L504 313M446 310L524 279M407 320L444 337M404 430V549M428 350V360" stroke="#e4c500" strokeWidth="1.500" fill="none" />
    <path d="M404 430V486M509 344V379M553 424V485" stroke="#d4b600" strokeWidth=".7" />
    <g strokeWidth="3">
      <path d="M197 595V578" stroke="#4aa0f5" /><path d="M191 578l6-13 6 13z" fill="#4aa0f5" />
      <path d="M197 595l14-5" stroke="#44805c" /><path d="M208 584l13 1-6 9-6 0z" fill="#44805c" />
      <path d="M197 595l13 6" stroke="#d94459" /><path d="M212 596l8 10-12 1z" fill="#d94459" />
      <circle cx="197" cy="595" r="2.500" fill="#11827b" />
    </g>
    <g fontFamily="Liberation Sans" fontSize="8" fontWeight="bold">
      <text x="191" y="587" fill="#315f93">Z</text><text x="203" y="589" fill="#2d5b40">Y</text><text x="202" y="597" fill="#8b2c39">X</text>
    </g>
    <path d="M164 621l10 11-1-10-4 1z" fill="#000" /><path d="M173 622l3-2v11h-2" fill="none" stroke="#000" strokeDasharray="1.500 1" />
  </svg>
);

/* ---------- data ---------- */

type Node = { label: string; level: number; icon?: Name; open?: boolean };

const nodes: Node[] = [
  { label: "Dati EDIFICIO", level: 0, icon: "building", open: false },
  { label: "BIM", level: 0, icon: "cube", open: true },
  { label: "LIVELLI", level: 1, icon: "levels", open: true },
  { label: "05 Copertura", level: 2 },
  { label: "04 Terrazzo Condominiale", level: 2 },
  { label: "03 Piano Secondo", level: 2 },
  { label: "02 Piano Primo", level: 2 },
  { label: "01 Piano Terra", level: 2 },
  { label: "00 Fondazione", level: 2 },
  { label: "VISTE 3D", level: 1, icon: "three", open: true },
  { label: "3D", level: 2 },
  { label: "TAVOLE GRAFICHE", level: 0, icon: "pencil", open: true },
  { label: "PLANIMETRIE", level: 1, icon: "plan" },
  { label: "PIANTE", level: 1, icon: "floor" },
  { label: "SEZIONI", level: 1, icon: "section" },
  { label: "PROSPETTI", level: 1, icon: "front" },
  { label: "LIBRERIA OGGETTI BIM", level: 0, icon: "books", open: false },
  { label: "RISULTATI di CALCOLO", level: 0, icon: "results", open: false },
  { label: "ELABORATI", level: 0, icon: "print", open: false },
  { label: "DIAGNOSTICA", level: 0, icon: "warn" },
];

const menus = ["Disegno", "Calcolo", "Strumenti", "Finestra", "Servizi", "?"];

export default function App() {
  const [menu, setMenu] = useState("Disegno");
  const [selected, setSelected] = useState("3D");

  return (
    <Window>
      <Global />
      <TitleBar>
        <QuickBar>
          <AppLogo letter="T" c="#1b5fc0" />
          <Divider />
          <QuickButton aria-label="Nuovo"><NewDoc /></QuickButton>
          <Caret />
          <QuickButton aria-label="Apri"><Folder /></QuickButton>
          <QuickButton aria-label="Salva"><Save /></QuickButton>
          <QuickButton aria-label="Stampa"><Printer /></QuickButton>
          <QuickButton aria-label="Selezione" $active><Cursor size={14} /></QuickButton>
          <QuickButton aria-label="Annulla"><Turn /></QuickButton>
          <Caret c="#a3adbd" />
          <QuickButton aria-label="Ripeti"><Turn flip /></QuickButton>
          <Caret c="#a3adbd" />
          <Account>Accedi ... <Person /></Account>
          <Divider />
          <QuickMenu aria-label="Personalizza">
            <svg width="6" height="7" viewBox="0 0 6 7"><path d="M0 .5h6" stroke="#222" /><path d="M0 3h6L3 6.500z" fill="#222" /></svg>
          </QuickMenu>
        </QuickBar>
        <Title>TerMus (v.50.00a) BIM</Title>
        <WindowButtons $wide>
          <GlyphButton aria-label="Riduci"><svg width="9" height="5" viewBox="0 0 9 5"><rect x=".5" y=".5" width="8" height="3" rx="1" fill="#fff" stroke="#55657f" /></svg></GlyphButton>
          <GlyphButton aria-label="Ingrandisci"><svg width="9" height="8" viewBox="0 0 9 8"><path d="M.5.500h8v7h-8z" fill="#fff" stroke="#55657f" /><path d="M3 3h3v2H3z" fill="#55657f" /></svg></GlyphButton>
          <GlyphButton aria-label="Chiudi"><svg width="9" height="8" viewBox="0 0 9 8"><path d="M1 1l7 6M8 1L1 7" stroke="#4b5b75" strokeWidth="3" /><path d="M1 1l7 6M8 1L1 7" stroke="#fff" /></svg></GlyphButton>
        </WindowButtons>
      </TitleBar>

      <TabRow>
        <FileTab>File</FileTab>
        {menus.map((m) => (
          <RibbonTab key={m} $active={m === menu} onClick={() => setMenu(m)}>{m}</RibbonTab>
        ))}
        <Spacer />
        <WindowButtons>
          <GlyphButton aria-label="Comprimi"><svg width="8" height="6" viewBox="0 0 8 6"><path d="M4 1l3 3-1 1H2L1 4z" fill="#fff" stroke="#55657f" /></svg></GlyphButton>
          <GlyphButton aria-label="Riduci vista"><svg width="9" height="5" viewBox="0 0 9 5"><rect x=".5" y=".5" width="8" height="3" rx="1" fill="#fff" stroke="#55657f" /></svg></GlyphButton>
          <GlyphButton aria-label="Ripristina vista"><svg width="9" height="9" viewBox="0 0 9 9"><path d="M2.500.500h6v5h-6zM.5 3.500h6v5h-6z" fill="#fff" stroke="#55657f" /></svg></GlyphButton>
          <GlyphButton aria-label="Chiudi vista"><svg width="9" height="8" viewBox="0 0 9 8"><path d="M1 1l7 6M8 1L1 7" stroke="#4b5b75" strokeWidth="3" /><path d="M1 1l7 6M8 1L1 7" stroke="#fff" /></svg></GlyphButton>
        </WindowButtons>
      </TabRow>

      <Ribbon>
        <Group>
          <GroupBody>
            <BigButton $w={37} $active><Cursor size={24} />Select<Caret /></BigButton>
            <ScrollPair>
              <svg width="12" height="12" viewBox="0 0 12 12"><path d="M1 10.500L6 1l5 9.500z" fill="#fff" stroke="#b8bfc9" /></svg>
              <svg width="12" height="12" viewBox="0 0 12 12"><path d="M1 1.500L6 11l5-9.500z" fill="#fff" stroke="#b8bfc9" /></svg>
            </ScrollPair>
            <GroupSplit />
            <BigButton $w={56} disabled><CubeGhost />Involucro<Caret c="#a3adbd" /></BigButton>
            <BigButton $w={52} disabled><PaintGhost />Proprietà<Caret c="#a3adbd" /></BigButton>
            <GroupSplit $tight />
            <BigButton $w={40} disabled><EditGhost />Edita</BigButton>
          </GroupBody>
          <GroupLabel>Disegno</GroupLabel>
        </Group>
        <Group>
          <GroupBody>
            <BigButton $w={38} disabled><ClipGhost />Incolla</BigButton>
            <SmallColumn><CopyIcon /><CutIcon /><PasteArea /></SmallColumn>
          </GroupBody>
          <GroupLabel>Appunti</GroupLabel>
        </Group>
        <Group>
          <GroupBody>
            <BigButton $w={32}><SnapIcon />Snap<Caret /></BigButton>
            <ToggleStack>
              <Toggle aria-label="Angolo"><Angle /></Toggle>
              <Toggle aria-label="Griglia"><DotLine /></Toggle>
              <Toggle aria-label="Retino"><Mesh /></Toggle>
            </ToggleStack>
          </GroupBody>
          <GroupLabel>Snap<svg width="7" height="10" viewBox="0 0 7 10" fill="none" stroke="#8596b3"><path d="M.5 6.500v-4h4M3 5l3 3M6.500 5v3.500h-3" /></svg></GroupLabel>
        </Group>
        <Group>
          <GroupBody><BigButton $w={46}><EyeIcon />Visibilità<Caret /></BigButton></GroupBody>
          <GroupLabel>Visibilità</GroupLabel>
        </Group>
        <Group>
          <GroupBody><BigButton $w={46}><PipetteIcon />Proprietà<br />(default)</BigButton></GroupBody>
          <GroupLabel>Copia da...</GroupLabel>
        </Group>
        <Spacer />
        <RibbonTools>
          <button aria-label="Licenza"><Padlock /></button>
          <Badged aria-label="Aggiornamenti"><Globe /><Badge>3</Badge></Badged>
          <svg width="10" height="14" viewBox="0 0 10 14"><path d="M8.500 1v12" stroke="#7c8fae" strokeDasharray="1.500 2" /></svg>
        </RibbonTools>
        <Help>
          <HelpStrip>HELP</HelpStrip>
          <HelpActions><AskIcon /><AskIcon film /></HelpActions>
          <HelpKeys>
            <dt>[F1]</dt><dd>Apre/Chiude la finestra di<br /><strong>HELP</strong></dd>
            <dt>[Ctrl]+[S]</dt><dd>Menu File: <strong>Salva</strong></dd>
          </HelpKeys>
          <Rounds>
            <Ball sign="i" a="#a3e08c" b="#37a83c" />
            <Ball sign="?" a="#9ab8ee" b="#4568b8" />
          </Rounds>
        </Help>
      </Ribbon>

      <Work>
        <SidePanel>
          <PanelHeader><ListIcon />Gestione Progetto<Pin /></PanelHeader>
          <ProjectBox><Mini name="project" /><ProjectName>ESVT_B23x23518</ProjectName></ProjectBox>
          <SectionTitle>PRINCIPALE</SectionTitle>
          <NavigatorBar>Navigatore</NavigatorBar>
          <TreeBox>
            <Tree>
              {nodes.map((n) => {
                const on = n.label === selected;
                return (
                  <TreeRow key={n.label} $level={n.level} $selected={on} onClick={() => setSelected(n.label)}>
                    <Slot $w={13} $dotted={n.open === undefined}>
                      {n.open !== undefined && (
                        <Expander aria-label={n.open ? "Comprimi" : "Espandi"}>
                          <svg width="5" height="5" viewBox="0 0 5 5"><path d={n.open ? "M0 2.500h5" : "M0 2.500h5M2.500 0v5"} stroke="#233d70" /></svg>
                        </Expander>
                      )}
                    </Slot>
                    {n.icon && <Slot $w={14}><Mini name={n.icon} /></Slot>}
                    <TreeLabel $selected={on}>{n.label}</TreeLabel>
                  </TreeRow>
                );
              })}
            </Tree>
          </TreeBox>
          <Grip />
          <ModuleButton $active><AppLogo letter="T" c="#1b5fc0" />PRINCIPALE</ModuleButton>
          <ModuleButton><AppLogo letter="P" c="#d3131a" />COMPUTO (PriMus)</ModuleButton>
          <PanelFoot><Caret /></PanelFoot>
        </SidePanel>

        <Center>
          <ViewToolbar>
            <QuickButton aria-label="Quote"><GhostTool d="M3.500 1v12M1.500 3l2-2 2 2M1.500 11l2 2 2-2M8.500 1.500h4v3h-4zM8.500 7.500h4v5h-4z" fill="none" /></QuickButton>
            <ToolSplit />
            <QuickButton aria-label="Solido"><GhostTool d="M1.500 3.500l3-2 8 1v8l-4 3-7-2zM1.500 3.500l7 1.500 4-2.500M8.500 5v8" /></QuickButton>
            <QuickButton aria-label="Superficie"><GhostTool d="M1.500 2.500l7 1 4 2v7h-11z" fill="#eceded" /></QuickButton>
            <QuickButton aria-label="Verifica"><GhostTool d="M1.500 7.500l3-1 2 3 3-8.500h3v2l-4.500 10h-3z" fill="#8f949b" /></QuickButton>
            <ToolSplit />
            <QuickButton aria-label="Selezione area"><GhostTool d="M1.500 3.500v-2h2M10.500 1.500h2v2M3.500 12.500h-2v-2M10.500 12.500h2v-2M4.500 4.500h5v5h-5z" fill="none" /></QuickButton>
            <ToolSplit />
            <QuickButton aria-label="Filtro vista"><GhostTool d="M1.500 1.500h7v2h4v9h-8v-3h-3zM6.500 6.500h4v4h-4z" fill="#e2e4e6" /></QuickButton>
            <ToolSplit />
            <QuickButton aria-label="Mappa termica" $active><HeatCube /></QuickButton>
          </ViewToolbar>
          <Stage>
            <Viewport>
              <Building />
              <Palette>
                <PaletteHead>
                  Visualizzazioni grafiche
                  <button aria-label="Aiuto">
                    <svg width="16" height="16" viewBox="0 0 16 16"><circle cx="8" cy="8" r="7.500" fill="#1281bd" /><path d="M5.500 6.200q0-2.700 2.600-2.700t2.500 2.300Q10.600 7.200 8 8.300V9.700M8 11v2" fill="none" stroke="#fff" strokeWidth="1.800" /></svg>
                  </button>
                  <CloseButton aria-label="Chiudi pannello"><svg width="9" height="9" viewBox="0 0 9 9"><path d="M1 1l7 7M8 1L1 8" stroke="#d80f2c" strokeWidth="2.200" /></svg></CloseButton>
                </PaletteHead>
                <PaletteRow>
                  <svg width="5" height="9" viewBox="0 0 5 9"><path d="M1 .5h3v5H1zM0 5.500h5M2.500 5.500v3" fill="#fff" stroke="#111" /></svg>
                  <Combo>
                    <ComboSelect aria-label="Grandezza"><option>Dispersioni per TRASMISSIONE (HTR)</option></ComboSelect>
                    <Caret />
                  </Combo>
                </PaletteRow>
                <Legend>
                  <LegendText $row={1}>[W/m²]</LegendText>
                  <LegendText $row={2}>1.02</LegendText>
                  <Limit>1.02</Limit>
                  <RampSlider type="range" aria-label="Limite superiore" defaultValue={100} />
                  <Ramp />
                  <RampSlider $low type="range" aria-label="Limite inferiore" defaultValue={0} />
                  <Limit $low>0.24</Limit>
                  <LegendText $row={4}>0.24</LegendText>
                </Legend>
                <ExplodeGrid>
                  <Field>
                    <FieldLabel htmlFor="vert">ESPLODI in verticale</FieldLabel>
                    <BarSlider id="vert" type="range" defaultValue={0} />
                  </Field>
                  <Field>
                    <FieldLabel><TickBox type="checkbox" />ESPLODI in orizzontale</FieldLabel>
                    <BarSlider type="range" aria-label="Esplosione orizzontale" defaultValue={0} disabled />
                  </Field>
                  <Field>
                    <FieldLabel htmlFor="alpha">Trasparenza</FieldLabel>
                    <BarSlider id="alpha" type="range" defaultValue={33} />
                  </Field>
                  <TopViewButton>
                    <svg width="12" height="12" viewBox="0 0 12 12" fill="#eee" stroke="#555"><path d="M1 3.500L6 1l5 2.500v5L6 11.500 1 8.500zM6 6v5" /><path d="M3.500 2.500L6 1l2.500 1.500v2L6 6.500 3.500 4.500z" fill="#2b86d4" stroke="#1c5a94" /></svg>
                    vista dall'alto
                  </TopViewButton>
                </ExplodeGrid>
              </Palette>
            </Viewport>
            <ScrollBar>
              <Chevron d="M1.500 5.500L4 3l2.500 2.500" /><Thumb /><Chevron d="M1.500 2.500L4 5l2.500-2.500" />
            </ScrollBar>
            <ScrollBar $horizontal>
              <Chevron d="M5.500 1.500L3 4l2.500 2.500" /><Thumb $horizontal /><Chevron d="M2.500 1.500L5 4l-2.500 2.500" />
            </ScrollBar>
          </Stage>
        </Center>

        <PropertyPanel>
          <PanelHeader>
            <svg width="10" height="12" viewBox="0 0 10 12"><path d="M1 .5h8v11H1z" fill="#fff7ef" stroke="#b07a4c" /><path d="M2.500 3h1M2.500 5.500h1M2.500 8h1M4.500 3h3M4.500 5.500h3M4.500 8h3" stroke="#777" /></svg>
            Proprietà<Pin />
          </PanelHeader>
          <PropertyBand />
          <PropertyTabs>
            <PropertyTab $active>Proprietà</PropertyTab>
            <PropertyTab>Risultati</PropertyTab>
          </PropertyTabs>
          <FilterRow>
            <label htmlFor="filter">Filtro entità</label>
            <Combo $muted><ComboSelect id="filter" disabled /><Caret c="#9aa5b8" /></Combo>
            <svg width="14" height="12" viewBox="0 0 14 12" fill="#e2e2e2" stroke="#9a9a9a"><path d="M1 1.500h8.500L7 6v5L4 8.500V6z" /><path d="M12.500 2.500L8 10.500" fill="none" strokeWidth="2" /></svg>
          </FilterRow>
          <PropertyBody />
        </PropertyPanel>

        <SideTabs>
          <SideTab>
            <svg width="13" height="13" viewBox="0 0 13 13" fill="none"><path d="M.5.500h12v12H.5z" stroke="#b6bec9" strokeDasharray="1.500 1.500" /><path d="M4 3h4l2 2v5H4z" fill="#fbe9da" stroke="#dba77c" /></svg>
            Copia
          </SideTab>
          <SideTab>
            <svg width="13" height="13" viewBox="0 0 13 13"><path d="M2 .5h6l3 3v9H2z" fill="#fff" stroke="#c2c8d0" /><text x="6.500" y="11" textAnchor="middle" fontFamily="Liberation Sans" fontWeight="bold" fontSize="7" fill="#eb9a6b">BG</text></svg>
            Background
          </SideTab>
          <SideTab>
            <svg width="13" height="13" viewBox="0 0 13 13" fill="none" stroke="#444"><path d="M1.500 1.500h4v4h-4z" fill="#2a8fc9" stroke="#156089" /><path d="M2 3l1.500 1.500L6 1" stroke="#fff" /><path d="M8 1.500h4v3H8zM1.500 8.500h4v3h-4zM8 12l1-4 3 1" /></svg>
            Filtro Selezione
          </SideTab>
        </SideTabs>
      </Work>

      <StatusBar>
        <StatusCell $w={168} />
        <StatusCell $w={145}>X: -24.24 - Y: 14.70 - Z: -0.50 [m]</StatusCell>
        <StatusCell $w={20} />
        <StatusCell $w={19} />
        <StatusCell $w={4} />
        <StatusCell $w={30}>
          <svg width="14" height="13" viewBox="0 0 14 13"><path d="M1.500 1.500h6v10h-6z" fill="#f2f2f2" stroke="#8693a8" /><circle cx="8" cy="5" r="2.800" fill="#e7f0f8" stroke="#6f7f97" /><path d="M10 6.500l3 2-3 2" fill="#e09a2a" stroke="#b0711a" strokeWidth=".7" /><path d="M1.500 8l4 4M5.500 8l-4 4" stroke="#d12035" strokeWidth="1.400" /></svg>
        </StatusCell>
        <svg width="14" height="16" viewBox="0 0 14 16" stroke="#7f95b8" strokeDasharray="1.500 1.500"><path d="M4 13.500h8M7 10.500h5M10 7.500h2" strokeWidth="1.500" /></svg>
      </StatusBar>
    </Window>
  );
}
